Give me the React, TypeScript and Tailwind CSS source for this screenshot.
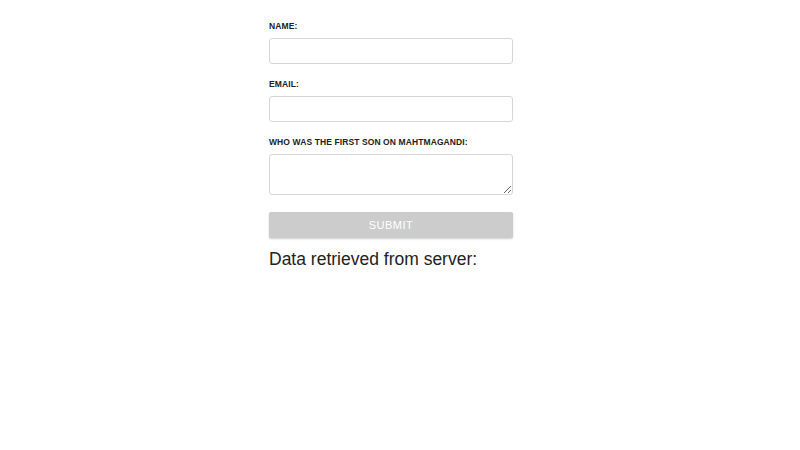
export default function App() {
    return (
        <div className="min-h-[450px] bg-white flex justify-center font-['Liberation_Sans',Arial,sans-serif] text-[#222]">
            <div className="w-[262px] pt-[21px]">
                <form className="flex flex-col" onSubmit={(e) => e.preventDefault()}>
                    <label className="text-[8.5px] font-bold tracking-[0.1px] uppercase leading-[11px] text-[#222]">
                        Name:
                    </label>
                    <input
                        type="text"
                        className="mt-[6px] w-[244px] h-[26px] border border-[#d6d6d6] rounded-[3px] bg-white outline-none"
                    />

                    <label className="mt-[15px] text-[8.5px] font-bold tracking-[0.1px] uppercase leading-[11px] text-[#222]">
                        Email:
                    </label>
                    <input
                        type="email"
                        className="mt-[6px] w-[244px] h-[26px] border border-[#d6d6d6] rounded-[3px] bg-white outline-none"
                    />

                    <label className="mt-[15px] text-[8.5px] font-bold tracking-[0.1px] uppercase leading-[11px] text-[#222]">
                        Who was the first son on Mahtmagandi:
                    </label>
                    <textarea className="mt-[6px] w-[244px] h-[41px] border border-[#d6d6d6] rounded-[3px] bg-white outline-none block" />

                    <button
                        type="submit"
                        className="mt-[17px] w-[244px] h-[26px] bg-[#cccccc] rounded-[2px] text-white text-[11px] tracking-[0.5px] uppercase shadow-[0_1px_2px_rgba(0,0,0,0.2)]"
                    >
                        Submit
                    </button>
                </form>
                <h2 className="mt-[10px] text-[17.5px] leading-[22px] text-[#222]">Data retrieved from server:</h2>
            </div>
        </div>
    );
}
